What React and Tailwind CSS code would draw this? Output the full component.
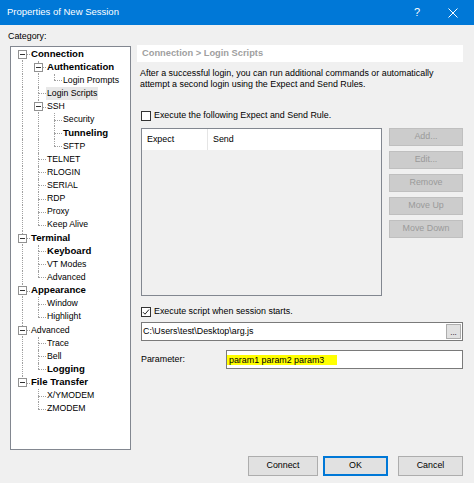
import React from 'react';

const tree = [
  { label: 'Connection', bold: true, children: [
    { label: 'Authentication', bold: true, children: [{ label: 'Login Prompts' }] },
    { label: 'Login Scripts', selected: true },
    { label: 'SSH', children: [{ label: 'Security' }, { label: 'Tunneling', bold: true }, { label: 'SFTP' }] },
    { label: 'TELNET' }, { label: 'RLOGIN' }, { label: 'SERIAL' }, { label: 'RDP' }, { label: 'Proxy' }, { label: 'Keep Alive' },
  ] },
  { label: 'Terminal', bold: true, children: [{ label: 'Keyboard', bold: true }, { label: 'VT Modes' }, { label: 'Advanced' }] },
  { label: 'Appearance', bold: true, children: [{ label: 'Window' }, { label: 'Highlight' }] },
  { label: 'Advanced', children: [{ label: 'Trace' }, { label: 'Bell' }, { label: 'Logging', bold: true }] },
  { label: 'File Transfer', bold: true, children: [{ label: 'X/YMODEM' }, { label: 'ZMODEM' }] },
];

function flatten(nodes, guides, out, isRoot) {
  nodes.forEach((n, i) => {
    const last = i === nodes.length - 1;
    const first = isRoot && i === 0;
    out.push({ ...n, guides, last, first, hasChildren: !!n.children });
    if (n.children) flatten(n.children, [...guides, !last], out, false);
  });
  return out;
}

const rows = flatten(tree, [], [], true);

function TreeRow({ row }) {
  return (
    <div className="flex h-[13.15px] items-stretch">
      <div className="w-[3px] shrink-0" />
      {row.guides.map((g, i) => (
        <div key={i} className="relative w-[16px] shrink-0">
          {g && <div className="absolute left-[8px] top-0 bottom-0 border-l border-dotted border-[#a0a0a0]" />}
        </div>
      ))}
      <div className="relative w-[16px] shrink-0">
        {!row.first && <div className="absolute left-[8px] top-0 h-1/2 border-l border-dotted border-[#a0a0a0]" />}
        {!row.last && <div className="absolute left-[8px] top-1/2 bottom-0 border-l border-dotted border-[#a0a0a0]" />}
        <div className="absolute left-[8px] right-0 top-1/2 border-t border-dotted border-[#a0a0a0]" />
        {row.hasChildren && (
          <div className="absolute left-[4px] top-1/2 -mt-[4.5px] flex h-[9px] w-[9px] items-center justify-center border border-[#919191] bg-white">
            <div className="h-px w-[5px] bg-[#333]" />
          </div>
        )}
      </div>
      <span
        className={
          'flex items-center whitespace-nowrap pl-[1px] pr-[1px] text-black ' +
          (row.bold ? 'font-bold text-[9.6px] ' : 'text-[8.7px] ') +
          (row.selected ? 'bg-[#e8e8e8]' : '')
        }
      >
        {row.label}
      </span>
    </div>
  );
}

function CheckBox({ checked }) {
  return (
    <div className="flex h-[10px] w-[10px] shrink-0 items-center justify-center border border-[#333] bg-white">
      {checked && (
        <svg width="8" height="8" viewBox="0 0 8 8">
          <path d="M1 4.2 L3 6.2 L7 1.5" fill="none" stroke="#222" strokeWidth="1" />
        </svg>
      )}
    </div>
  );
}

function DisabledButton({ children }) {
  return (
    <div className="flex h-[18px] w-[74px] items-center justify-center border border-[#bfbfbf] bg-[#cccccc] text-[8.9px] text-[#9a9a9a]">
      {children}
    </div>
  );
}

export default function App() {
  return (
    <div className="flex h-[483px] w-[474px] flex-col overflow-hidden bg-[#f0f0f0] font-['Liberation_Sans',Arial,sans-serif] text-[8.9px] text-black">
      {/* Title bar */}
      <div className="flex h-[25px] shrink-0 items-center bg-[#0078d7] text-white">
        <span className="pl-[7px] text-[9.5px]">Properties of New Session</span>
        <span className="ml-auto mr-[28px] text-[11px]">?</span>
        <svg className="mr-[16px]" width="10" height="10" viewBox="0 0 10 10">
          <path d="M0.5 0.5 L9.5 9.5 M9.5 0.5 L0.5 9.5" stroke="white" strokeWidth="1" />
        </svg>
      </div>

      {/* Body */}
      <div className="flex flex-1 flex-col pl-[8px]">
        <div className="mt-[5px] h-[13px] leading-[13px]">Category:</div>
        <div className="mt-[2px] flex items-start">
          {/* Tree */}
          <div className="ml-[2px] mt-[1px] h-[404px] w-[121px] shrink-0 border border-[#828790] bg-white pt-[0.5px]">
            {rows.map((r, i) => (
              <TreeRow key={i} row={r} />
            ))}
          </div>

          {/* Right panel */}
          <div className="ml-[9px] flex w-[323px] flex-col">
            <div className="-ml-[3px] flex h-[17px] items-center bg-white pl-[5px] text-[9.3px] font-bold text-[#a0a0a0]">
              Connection &gt; Login Scripts
            </div>
            <div className="mt-[6px] leading-[11px]">
              <div>After a successful login, you can run additional commands or automatically</div>
              <div>attempt a second login using the Expect and Send Rules.</div>
            </div>
            <div className="mt-[19px] flex h-[13px] items-center pl-[1px]">
              <CheckBox />
              <span className="ml-[3px]">Execute the following Expect and Send Rule.</span>
            </div>
            <div className="mt-[6px] flex items-start">
              <div className="ml-[1px] flex h-[168px] w-[241px] flex-col border border-[#828790] bg-[#f0f0f0]">
                <div className="flex h-[21px] items-center bg-white">
                  <div className="flex h-full w-[66px] items-center border-r border-[#e5e5e5] pl-[5px]">Expect</div>
                  <div className="pl-[5px]">Send</div>
                </div>
              </div>
              <div className="ml-[7px] flex flex-col gap-[5px]">
                <DisabledButton>Add...</DisabledButton>
                <DisabledButton>Edit...</DisabledButton>
                <DisabledButton>Remove</DisabledButton>
                <DisabledButton>Move Up</DisabledButton>
                <DisabledButton>Move Down</DisabledButton>
              </div>
            </div>
            <div className="mt-[9px] flex h-[13px] items-center pl-[1px]">
              <CheckBox checked />
              <span className="ml-[3px]">Execute script when session starts.</span>
            </div>
            <div className="ml-[1px] mt-[4px] flex h-[19px] items-center border border-[#7a7a7a] bg-white pl-[1px]">
              <span>C:\Users\test\Desktop\arg.js</span>
              <div className="ml-auto mr-[1px] flex h-[15px] w-[15px] items-end justify-center border border-[#adadad] bg-[#e1e1e1] pb-[1px] text-[8px] leading-[8px]">
                ...
              </div>
            </div>
            <div className="mt-[9px] flex h-[19px] items-center">
              <span className="w-[86px] pl-[1px]">Parameter:</span>
              <div className="flex h-full flex-1 items-center border border-[#7a7a7a] bg-white">
                <span className="bg-[#ffff00] pl-[2px] pr-[13px] leading-[10px]">param1 param2 param3</span>
              </div>
            </div>
            <div className="mt-[87px] flex justify-end">
              <div className="flex h-[20px] w-[70px] items-center justify-center border border-[#adadad] bg-[#e1e1e1]">Connect</div>
              <div className="ml-[5px] flex h-[20px] w-[65px] items-center justify-center border border-[#0078d7] bg-[#e1e1e1] shadow-[inset_0_0_0_1px_#0078d7]">OK</div>
              <div className="ml-[10px] flex h-[20px] w-[65px] items-center justify-center border border-[#adadad] bg-[#e1e1e1]">Cancel</div>
            </div>
          </div>
        </div>
      </div>
    </div>
  );
}
